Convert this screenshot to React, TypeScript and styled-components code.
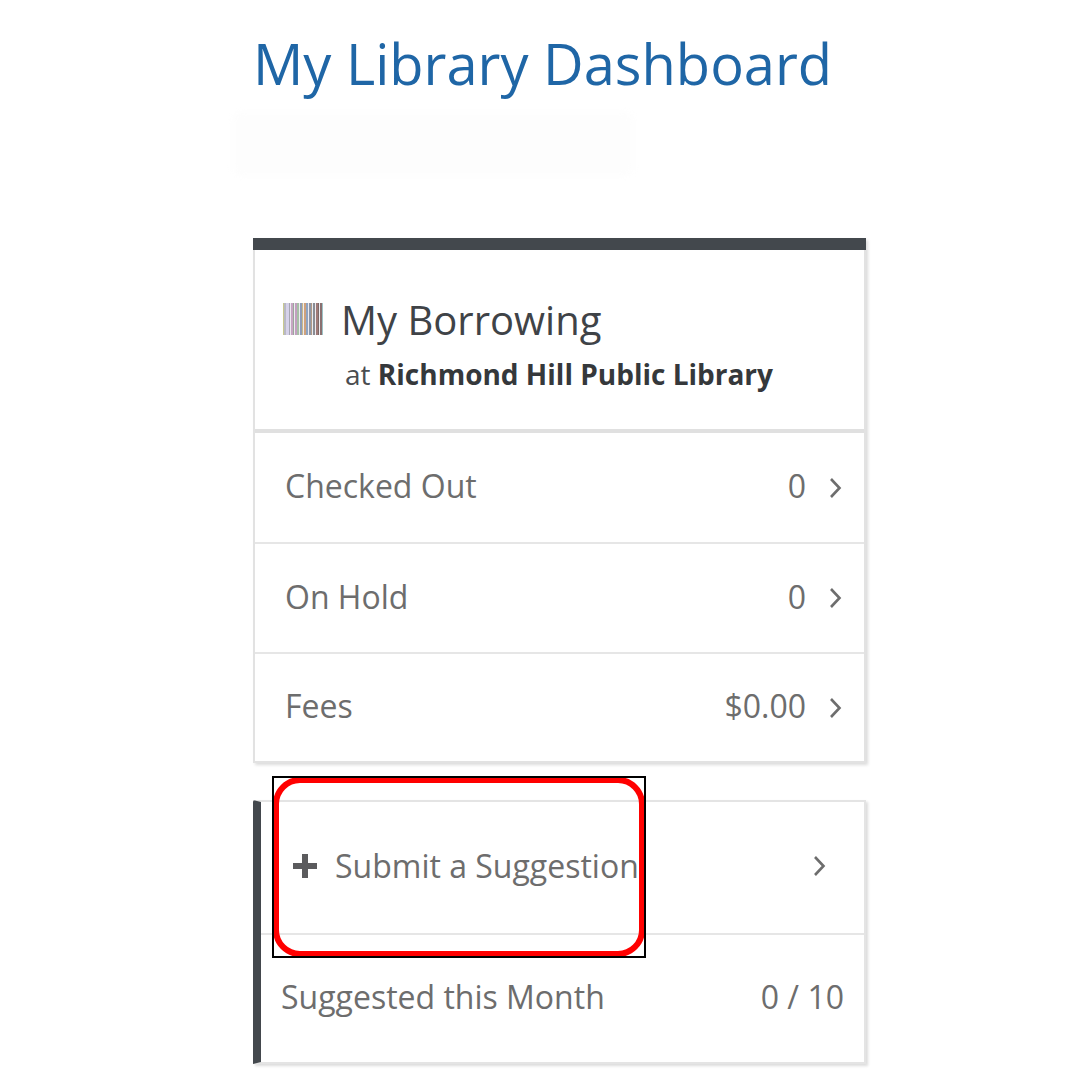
import React from "react";
import styled, { createGlobalStyle } from "styled-components";

const Global = createGlobalStyle`
  html, body { margin: 0; padding: 0; background: #fff; }
  body { font-family: "Open Sans", "Liberation Sans", sans-serif; }
`;

const Page = styled.div`
  position: relative;
  width: 1080px;
  height: 1080px;
  overflow: hidden;
  padding: 26px 214px 0 253px;
  box-sizing: border-box;
`;

const Title = styled.h1`
  margin: 0 0 138px 0;
  font-size: 56px;
  line-height: 74px;
  font-weight: 400;
  color: #1f66a6;
  white-space: nowrap;
`;

const ErasedPatch = styled.div`
  position: absolute;
  left: 233px;
  top: 112px;
  width: 400px;
  height: 64px;
  background: #fdfdfd;
  border-radius: 8px;
  filter: blur(3px);
`;

const Card = styled.section`
  background: #fff;
  box-shadow: 2px 2px 3px rgba(0, 0, 0, 0.14);
  margin-bottom: 37px;
`;

const TopBar = styled.div`
  height: 12px;
  background: #43484d;
`;

const CardBody = styled.div`
  border: 2px solid #e2e2e2;
  border-top: none;
`;

const Header = styled.header`
  height: 183px;
  box-sizing: border-box;
  padding: 45px 0 0 28px;
  border-bottom: 4px solid #e0e0e0;
`;

const HeaderLine = styled.div`
  display: flex;
  align-items: center;
  gap: 18px;
  height: 50px;
`;

const HeaderTitle = styled.h2`
  margin: 0;
  font-size: 40px;
  font-weight: 400;
  line-height: 50px;
  color: #3f4347;
`;

const Sub = styled.div`
  margin: 11px 0 0 62px;
  font-size: 28px;
  line-height: 36px;
  color: #4a4d50;
  white-space: nowrap;
  b { font-weight: 700; color: #35383b; }
`;

const Row = styled.div<{ $h: number }>`
  display: flex;
  align-items: center;
  height: ${(p) => p.$h}px;
  box-sizing: border-box;
  padding: 0 20px 0 30px;
  border-bottom: 2px solid #e6e6e6;
  color: #6d6d6d;
  font-size: 32px;
  &:last-child { border-bottom: none; }
`;

const Label = styled.span`
  flex: 1;
  padding-bottom: 4px;
  white-space: nowrap;
`;

const Value = styled.span`
  padding-bottom: 4px;
  white-space: nowrap;
`;

const Chevron = styled.svg`
  width: 13px;
  height: 22px;
  margin: 0 2px 0 23px;
  fill: none;
  stroke: #6d6d6d;
  stroke-width: 2.6;
`;

const Card2 = styled.section`
  background: #fff;
  border: 2px solid #e4e4e4;
  border-left: 8px solid #43484d;
  box-shadow: 2px 2px 3px rgba(0, 0, 0, 0.14);
  border-top-left-radius: 2px;
`;

const SuggestRow = styled(Row)`
  padding: 0 36px 4px 31px;
  ${Label} { padding-bottom: 0; }
`;

const QuotaRow = styled(Row)`
  padding: 0 20px 0 20px;
`;

const PlusIcon = styled.svg`
  width: 26px;
  height: 26px;
  margin-right: 17px;
  fill: #5b5b5d;
`;

const Highlight = styled.div`
  position: absolute;
  left: 272px;
  top: 776px;
  width: 374px;
  height: 182px;
  box-sizing: border-box;
  border: 2px solid #000;
  overflow: hidden;
  &::after {
    content: "";
    position: absolute;
    inset: -1px;
    border: 6px solid #f00;
    border-radius: 27px;
  }
`;

const bars: [number, number, string][] = [
  [0, 1, "#c9c98f"], [1, 2, "#b9b9c4"], [3, 3, "#d6d2ea"], [6, 1, "#a7a7b4"],
  [8, 2, "#c7a6c4"], [10, 1, "#9aa89a"], [12, 2, "#c2a0c0"], [14, 2, "#a6c0a6"],
  [17, 2, "#8f9db8"], [19, 1, "#c9b98c"], [21, 2, "#d0a27c"], [23, 2, "#8ea4c2"],
  [26, 2, "#8f97a8"], [28, 1, "#b09a86"], [30, 2, "#888c94"], [33, 2, "#a07a78"],
  [35, 1, "#7c6a6a"], [37, 2, "#8a7070"], [39, 1, "#9cc2c6"],
];

const Barcode = () => (
  <svg width="40" height="32" viewBox="0 0 40 32" style={{ marginTop: -3 }}>
    <rect x={0} y={0} width={40} height={32} fill="#ecebf0" />
    {bars.map(([x, w, c]) => (
      <rect key={x} x={x} y={0} width={w} height={32} fill={c} />
    ))}
  </svg>
);

const Arrow = () => (
  <Chevron viewBox="0 0 13 22">
    <path d="M2 2 L10.5 11 L2 20" />
  </Chevron>
);

export default function App() {
  return (
    <Page>
      <Global />
      <ErasedPatch />
      <Title>My Library Dashboard</Title>
      <Card>
        <TopBar />
        <CardBody>
          <Header>
            <HeaderLine>
              <Barcode />
              <HeaderTitle>My Borrowing</HeaderTitle>
            </HeaderLine>
            <Sub>
              at <b>Richmond Hill Public Library</b>
            </Sub>
          </Header>
          <Row $h={111}>
            <Label>Checked Out</Label>
            <Value>0</Value>
            <Arrow />
          </Row>
          <Row $h={110}>
            <Label>On Hold</Label>
            <Value>0</Value>
            <Arrow />
          </Row>
          <Row $h={107}>
            <Label>Fees</Label>
            <Value>$0.00</Value>
            <Arrow />
          </Row>
        </CardBody>
      </Card>
      <Card2>
        <SuggestRow $h={133}>
          <PlusIcon viewBox="0 0 26 26">
            <path d="M10 1h6v9h9v6h-9v9h-6v-9H1v-6h9z" />
          </PlusIcon>
          <Label>Submit a Suggestion</Label>
          <Arrow />
        </SuggestRow>
        <QuotaRow $h={127}>
          <Label>Suggested this Month</Label>
          <Value>0 / 10</Value>
        </QuotaRow>
      </Card2>
      <Highlight />
    </Page>
  );
}
